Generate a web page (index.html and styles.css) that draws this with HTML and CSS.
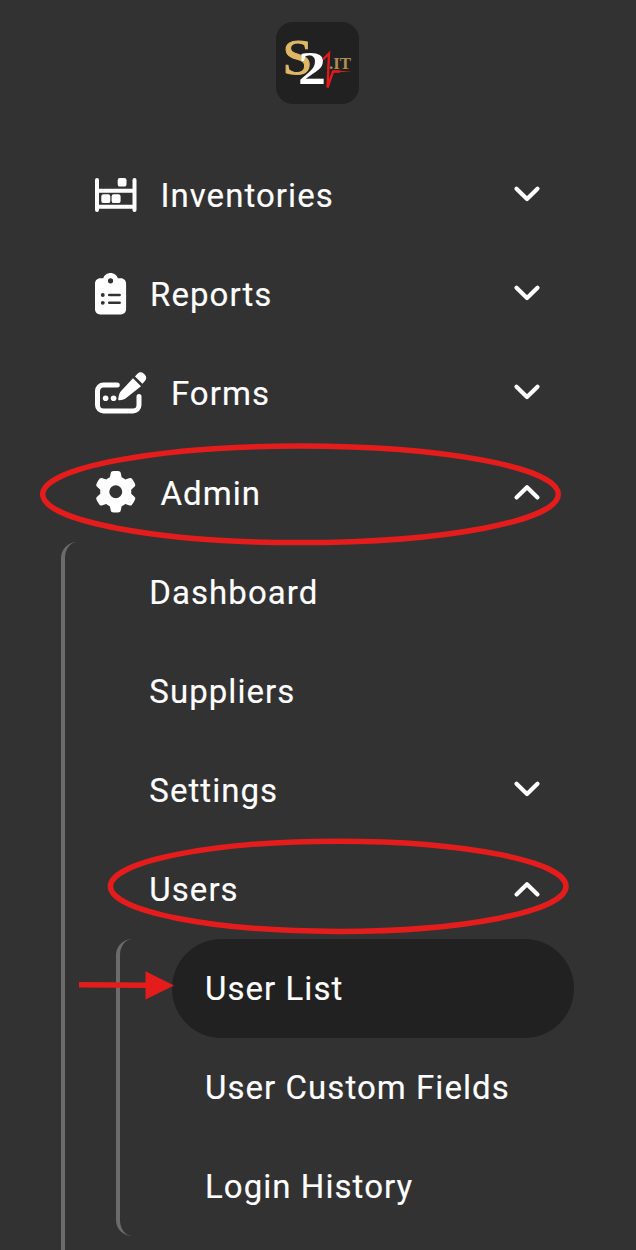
FILE: index.html
```html
<!DOCTYPE html>
<html lang="en">
<head>
    <meta charset="UTF-8">
    <meta name="viewport" content="width=device-width, initial-scale=1.0">
    <title>S2.IT</title>
    <link rel="stylesheet" href="styles.css">
</head>
<body>
    <div class="sidebar">
        <!-- Logo -->
        <div class="logo">
            <svg width="83" height="82" viewBox="0 0 83 82">
                <text class="logo-s" x="6.5" y="52" textLength="30" lengthAdjust="spacingAndGlyphs">S</text>
                <text class="logo-2" x="22" y="61.5" textLength="28" lengthAdjust="spacingAndGlyphs">2</text>
                <text class="logo-it" x="53" y="46.5" textLength="22" lengthAdjust="spacingAndGlyphs">.IT</text>
                <path class="logo-pulse" d="M47 37.5l6-6-1.5 34 5.5-16h7"/>
                <path class="logo-tail" d="M56.5 48.2L76 49.4 56.5 50.6z"/>
            </svg>
        </div>

        <!-- Menu -->
        <ul class="menu">
            <li class="item">
                <svg class="icon" width="41.5" height="41.5" viewBox="0 0 41.5 41.5">
                    <path class="line" d="M2 6v30M39.5 6v30M2 16.8h37.5M2 32.8h37.5"/>
                    <rect x="22.7" y="4" width="8.8" height="8.6" rx="2.2"/>
                    <rect x="6.3" y="20.3" width="9" height="8.8" rx="2.2"/>
                    <rect x="16.6" y="20.3" width="9" height="8.8" rx="2.2"/>
                </svg>
                <span class="label">Inventories</span>
                <svg class="chevron" width="26" height="16" viewBox="0 0 26 16"><path d="M2.5 2.8L13 13 23.5 2.8"/></svg>
            </li>
            <li class="item">
                <svg class="icon" width="31.1" height="41.5" viewBox="0 0 384 512">
                    <path fill-rule="evenodd" d="M192 0c-42 0-77 27-90 64H64C29 64 0 93 0 128v320c0 35 29 64 64 64h256c35 0 64-29 64-64V128c0-35-29-64-64-64h-38C269 27 234 0 192 0zm0 64a32 32 0 1 1 0 64 32 32 0 1 1 0-64zM96 248a24 24 0 1 1 0 48 24 24 0 1 1 0-48zm80 8h128a16 16 0 0 1 0 32H176a16 16 0 0 1 0-32zM96 344a24 24 0 1 1 0 48 24 24 0 1 1 0-48zm80 8h128a16 16 0 0 1 0 32H176a16 16 0 0 1 0-32z"/>
                </svg>
                <span class="label">Reports</span>
                <svg class="chevron" width="26" height="16" viewBox="0 0 26 16"><path d="M2.5 2.8L13 13 23.5 2.8"/></svg>
            </li>
            <li class="item">
                <svg class="icon" width="51.9" height="41.5" viewBox="0 0 51.9 41.5">
                    <path class="frame" d="M22.3 13H8.5a6 6 0 0 0-6 6v14a6 6 0 0 0 6 6H38a6 6 0 0 0 6-6v-8.5"/>
                    <circle cx="10.6" cy="26.2" r="2.8"/>
                    <circle cx="18.6" cy="26.2" r="2.8"/>
                    <path d="M38 6.2l8 8-14.5 11.5c-1.8 1.4-3.1 1.9-5.3 2.3l-1.6.3c-1 .2-1.6-.5-1.4-1.5l.7-3.5c.4-1.8 1-3 2.2-4.4zM40 4.4l2.2-2.4c2-2.2 4.6-2.3 6.7-.3l.6.6c2.3 2.1 2.3 4.8.2 6.9l-2.3 2.5z"/>
                </svg>
                <span class="label">Forms</span>
                <svg class="chevron" width="26" height="16" viewBox="0 0 26 16"><path d="M2.5 2.8L13 13 23.5 2.8"/></svg>
            </li>
            <li class="item">
                <svg class="icon" width="41.5" height="41.5" viewBox="0 0 512 512">
                    <path d="M495.9 166.6c3.2 8.7 .5 18.4-6.4 24.6l-43.3 39.4c1.1 8.3 1.7 16.8 1.7 25.4s-.6 17.1-1.7 25.4l43.3 39.4c6.9 6.2 9.6 15.9 6.4 24.6c-4.4 11.9-9.7 23.3-15.8 34.3l-4.7 8.1c-6.6 11-14 21.4-22.1 31.2c-5.9 7.2-15.7 9.6-24.5 6.8l-55.7-17.7c-13.4 10.3-28.2 18.9-44 25.4l-12.5 57.1c-2 9.1-9 16.3-18.2 17.8c-13.8 2.3-28 3.5-42.5 3.5s-28.7-1.2-42.5-3.5c-9.2-1.5-16.2-8.7-18.2-17.8l-12.5-57.1c-15.8-6.5-30.6-15.1-44-25.4L83.1 425.9c-8.8 2.8-18.6 .3-24.5-6.8c-8.1-9.8-15.5-20.2-22.1-31.2l-4.7-8.1c-6.1-11-11.4-22.4-15.8-34.3c-3.2-8.7-.5-18.4 6.4-24.6l43.3-39.4C64.6 273.1 64 264.6 64 256s.6-17.1 1.7-25.4L22.4 191.2c-6.9-6.2-9.6-15.9-6.4-24.6c4.4-11.9 9.7-23.3 15.8-34.3l4.7-8.1c6.6-11 14-21.4 22.1-31.2c5.9-7.2 15.7-9.6 24.5-6.8l55.7 17.7c13.4-10.3 28.2-18.9 44-25.4l12.5-57.1c2-9.1 9-16.3 18.2-17.8C227.3 1.2 241.5 0 256 0s28.7 1.2 42.5 3.5c9.2 1.5 16.2 8.7 18.2 17.8l12.5 57.1c15.8 6.5 30.6 15.1 44 25.4l55.7-17.7c8.8-2.8 18.6-.3 24.5 6.8c8.1 9.8 15.5 20.2 22.1 31.2l4.7 8.1c6.1 11 11.4 22.4 15.8 34.3zM256 336a80 80 0 1 0 0-160 80 80 0 1 0 0 160z"/>
                </svg>
                <span class="label">Admin</span>
                <svg class="chevron" width="26" height="16" viewBox="0 0 26 16"><path d="M2.5 14.4L13 4.2 23.5 14.4"/></svg>
            </li>
        </ul>

        <!-- Admin submenu -->
        <ul class="submenu">
            <li class="item"><span class="label">Dashboard</span></li>
            <li class="item"><span class="label">Suppliers</span></li>
            <li class="item">
                <span class="label">Settings</span>
                <svg class="chevron" width="26" height="16" viewBox="0 0 26 16"><path d="M2.5 2.8L13 13 23.5 2.8"/></svg>
            </li>
            <li class="item">
                <span class="label">Users</span>
                <svg class="chevron" width="26" height="16" viewBox="0 0 26 16"><path d="M2.5 14.4L13 4.2 23.5 14.4"/></svg>
            </li>
            <li>
                <ul class="submenu-inner">
                    <li class="item active"><span class="label">User List</span></li>
                    <li class="item"><span class="label">User Custom Fields</span></li>
                    <li class="item"><span class="label">Login History</span></li>
                </ul>
            </li>
        </ul>

        <!-- Red marks over the menu -->
        <svg class="marks" width="636" height="1250" viewBox="0 0 636 1250">
            <ellipse cx="300.5" cy="494.3" rx="257.8" ry="48.3"/>
            <ellipse cx="338.2" cy="886.3" rx="227.8" ry="45.1"/>
            <path d="M79 984.7L147 985.3"/>
            <path class="arrow-head" d="M145.5 971.3L174 985.6 145.5 999.6z"/>
        </svg>
    </div>
</body>
</html>
```

FILE: styles.css
```css
body {
    margin: 0;
    background-color: #323232;
    color: white;
    font-family: Roboto, sans-serif;
}

ul {
    margin: 0;
    padding: 0;
    list-style: none;
}

.sidebar {
    position: relative;
    box-sizing: border-box;
    width: 636px;
    height: 1250px;
    padding-top: 22px;
    overflow: hidden;
}

.logo {
    width: 83px;
    height: 82px;
    margin: 0 0 42px 276px;
    background-color: #212121;
    border-radius: 17px;
}

.logo svg {
    display: block;
}

.logo text {
    font-family: "Liberation Serif", serif;
}

.logo .logo-s {
    font-size: 50px;
    fill: #dfb866;
    stroke: #dfb866;
    stroke-width: 1;
}

.logo .logo-2 {
    font-size: 46px;
    font-weight: bold;
    fill: white;
}

.logo .logo-it {
    font-size: 17px;
    font-weight: bold;
    fill: #b08d55;
}

.logo-pulse {
    fill: none;
    stroke: #e01a1a;
    stroke-width: 2.4;
}

.logo-tail {
    fill: #e01a1a;
}

.item {
    display: flex;
    align-items: center;
    box-sizing: border-box;
    height: 99.1px;
    padding-right: 96.5px;
}

.menu .item {
    padding-left: 94.5px;
}

.icon {
    margin-right: 24.5px;
    margin-bottom: 2px;
    fill: white;
    overflow: visible;
}

.icon .line {
    fill: none;
    stroke: white;
    stroke-width: 4;
    stroke-linecap: round;
}

.icon .frame {
    fill: none;
    stroke: white;
    stroke-width: 5;
    stroke-linecap: round;
}

.label {
    margin-top: 1.4px;
    font-size: 33px;
    line-height: 40px;
    letter-spacing: 1.05px;
    -webkit-text-stroke: 0.15px white;
}

.chevron {
    margin-left: auto;
    margin-bottom: 3px;
    overflow: visible;
}

.chevron path {
    fill: none;
    stroke: white;
    stroke-width: 4.2;
    stroke-linecap: round;
    stroke-linejoin: round;
}

.submenu {
    height: 760px;
    margin-left: 61px;
    border-left: 4px solid #6b6b6b;
    border-radius: 16px 0 0 16px;
}

.submenu > .item {
    padding-left: 84.3px;
}

.submenu-inner {
    margin-left: 51px;
    border-left: 4px solid #6b6b6b;
    border-radius: 16px;
}

.submenu-inner .item {
    margin: 0 62px 0 52px;
    padding: 0 0 0 33px;
}

.submenu-inner .active {
    background-color: #212121;
    border-radius: 50px;
}

/* sits on top of the menu */
.marks {
    position: absolute;
    top: 0;
    left: 0;
    fill: none;
    stroke: #e51c1c;
    stroke-width: 5.5;
    pointer-events: none;
}

.marks .arrow-head {
    fill: #e51c1c;
    stroke: none;
}
```
